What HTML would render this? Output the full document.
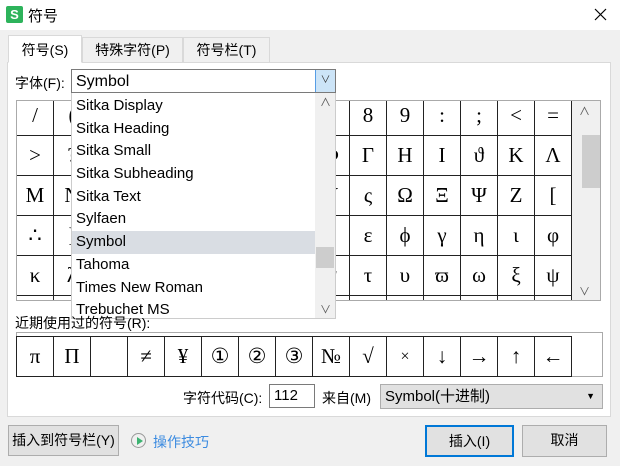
<!DOCTYPE html>
<html><head><meta charset="utf-8"><style>
*{margin:0;padding:0;box-sizing:border-box}
body{width:620px;height:466px;background:#f0f0f0;font-family:"Liberation Sans","Noto Sans CJK SC",sans-serif;font-size:14px;color:#000;position:relative;overflow:hidden}
.a{position:absolute}
.title{left:0;top:0;width:620px;height:30px;background:#fff}
.tab{top:37px;height:25px;border:1px solid #d9d9d9;border-bottom:none;background:#f0f0f0;text-align:center;line-height:24px;font-size:14px}
.panel{left:7px;top:62px;width:604px;height:355px;background:#fff;border:1px solid #d9d9d9}
table{border-collapse:collapse}
.grid td{width:37px;height:40px;border:1px solid #222;text-align:center;font-family:"Liberation Serif","DejaVu Serif",serif;font-size:21px;padding:0}
.list div{height:22.7px;line-height:22px;padding-left:4px;font-size:15px}
.btn{background:#e1e1e1;border:1px solid #adadad;text-align:center;line-height:29px;font-size:14px}
</style></head><body>
<div class="a title"></div>
<div class="a" style="left:6px;top:6px;width:17px;height:17px;background:#2db35b;border-radius:2px;color:#fff;font-weight:bold;font-size:13px;text-align:center;line-height:17px">S</div>
<div class="a" style="left:28px;top:5px;font-size:15px">符号</div>
<svg class="a" style="left:594px;top:8px" width="13" height="13"><path d="M1 1L12 12M12 1L1 12" stroke="#000" stroke-width="1.2"/></svg>

<div class="a panel"></div>
<div class="a tab" style="left:8px;width:74px;background:#fff;top:35px;height:28px;border-bottom:1px solid #fff;line-height:28px">符号(S)</div>
<div class="a tab" style="left:82px;width:101px">特殊字符(P)</div>
<div class="a tab" style="left:183px;width:87px">符号栏(T)</div>

<div class="a" style="left:15px;top:73px">字体(F):</div>
<div class="a" style="left:71px;top:69px;width:265px;height:24px;border:1px solid #7a7a7a;background:#fff;padding-left:4px;line-height:23px;font-size:16px">Symbol</div>
<div class="a" style="left:315px;top:70px;width:20px;height:22px;background:#cce4f7;border-left:1px solid #569de5;text-align:center;font-size:10px;line-height:22px;color:#333">∨</div>

<div class="a" style="left:16px;top:100px;width:585px;height:201px;border:1px solid #aaa;overflow:hidden;background:#fff">
<table class="grid" style="margin-top:-6px;margin-left:-1px">
<tr><td>/</td><td>(</td><td>1</td><td>2</td><td>3</td><td>4</td><td>5</td><td>6</td><td>7</td><td>8</td><td>9</td><td>:</td><td>;</td><td>&lt;</td><td>=</td></tr>
<tr><td>&gt;</td><td>?</td><td>≅</td><td>Α</td><td>Β</td><td>Χ</td><td>Δ</td><td>Ε</td><td>Φ</td><td>Γ</td><td>Η</td><td>Ι</td><td>ϑ</td><td>Κ</td><td>Λ</td></tr>
<tr><td>Μ</td><td>Ν</td><td>Ο</td><td>Π</td><td>Θ</td><td>Ρ</td><td>Σ</td><td>Τ</td><td>Υ</td><td>ς</td><td>Ω</td><td>Ξ</td><td>Ψ</td><td>Ζ</td><td>[</td></tr>
<tr><td>∴</td><td>]</td><td>⊥</td><td>_</td><td>‾</td><td>α</td><td>β</td><td>χ</td><td>δ</td><td>ε</td><td>ϕ</td><td>γ</td><td>η</td><td>ι</td><td>φ</td></tr>
<tr><td>κ</td><td>λ</td><td>μ</td><td>ν</td><td>ο</td><td>π</td><td>θ</td><td>ρ</td><td>σ</td><td>τ</td><td>υ</td><td>ϖ</td><td>ω</td><td>ξ</td><td>ψ</td></tr>
<tr><td>{</td><td>|</td><td>}</td><td>~</td><td></td><td></td><td></td><td></td><td></td><td></td><td></td><td></td><td></td><td></td><td></td></tr>
</table>
<div class="a" style="left:555px;top:0;width:29px;height:200px;background:#f0f0f0"></div>
<div class="a" style="left:565px;top:34px;width:18px;height:53px;background:#cdcdcd"></div>
<div class="a" style="left:562px;top:2px;font-size:11px;color:#555">∧</div>
<div class="a" style="left:562px;top:182px;font-size:11px;color:#555">∨</div>
</div>

<div class="a list" style="left:71px;top:93px;width:265px;height:226px;background:#fff;border:1px solid #ccc;border-top:none;overflow:hidden;padding-top:2px">
<div>Sitka Display</div><div>Sitka Heading</div><div>Sitka Small</div><div>Sitka Subheading</div><div>Sitka Text</div><div>Sylfaen</div><div style="background:#d9dde3">Symbol</div><div>Tahoma</div><div>Times New Roman</div><div>Trebuchet MS</div>
</div>
<div class="a" style="left:315px;top:93px;width:20px;height:225px;background:#f0f0f0"></div>
<div class="a" style="left:316px;top:247px;width:18px;height:21px;background:#cdcdcd"></div>
<div class="a" style="left:320px;top:94px;font-size:11px;color:#555">∧</div>
<div class="a" style="left:320px;top:301px;font-size:11px;color:#555">∨</div>

<div class="a" style="left:15px;top:313px;font-size:14px">近期使用过的符号(R):</div>
<div class="a" style="left:16px;top:332px;width:587px;height:45px;border:1px solid #aaa;background:#fff">
<table class="grid" style="margin:3px 0 0 -1px"><tr style="height:40px"><td style="height:38px">π</td><td>Π</td><td></td><td>≠</td><td>¥</td><td>①</td><td>②</td><td>③</td><td>№</td><td>√</td><td style="font-size:16px">×</td><td>↓</td><td>→</td><td>↑</td><td>←</td></tr></table>
</div>

<div class="a" style="left:183px;top:388px">字符代码(C):</div>
<div class="a" style="left:269px;top:384px;width:46px;height:24px;border:1px solid #7a7a7a;background:#fff;padding-left:4px;line-height:22px;font-size:15px">112</div>
<div class="a" style="left:322px;top:388px">来自(M)</div>
<div class="a" style="left:380px;top:384px;width:223px;height:25px;border:1px solid #adadad;background:#e1e1e1;padding-left:4px;line-height:23px;font-size:15px">Symbol(十进制)<span style="position:absolute;right:7px;font-size:9px">▼</span></div>

<div class="a btn" style="left:8px;top:425px;width:111px;height:31px">插入到符号栏(Y)</div>
<div class="a" style="left:131px;top:433px;width:15px;height:15px;border:1.5px solid #999;border-radius:50%"></div>
<div class="a" style="left:137px;top:437px;width:0;height:0;border-left:6px solid #3cb371;border-top:4px solid transparent;border-bottom:4px solid transparent"></div>
<div class="a" style="left:153px;top:432px;color:#3c8be0">操作技巧</div>
<div class="a btn" style="left:425px;top:425px;width:89px;height:32px;border:2px solid #0078d7">插入(I)</div>
<div class="a btn" style="left:522px;top:425px;width:85px;height:32px">取消</div>
</body></html>
